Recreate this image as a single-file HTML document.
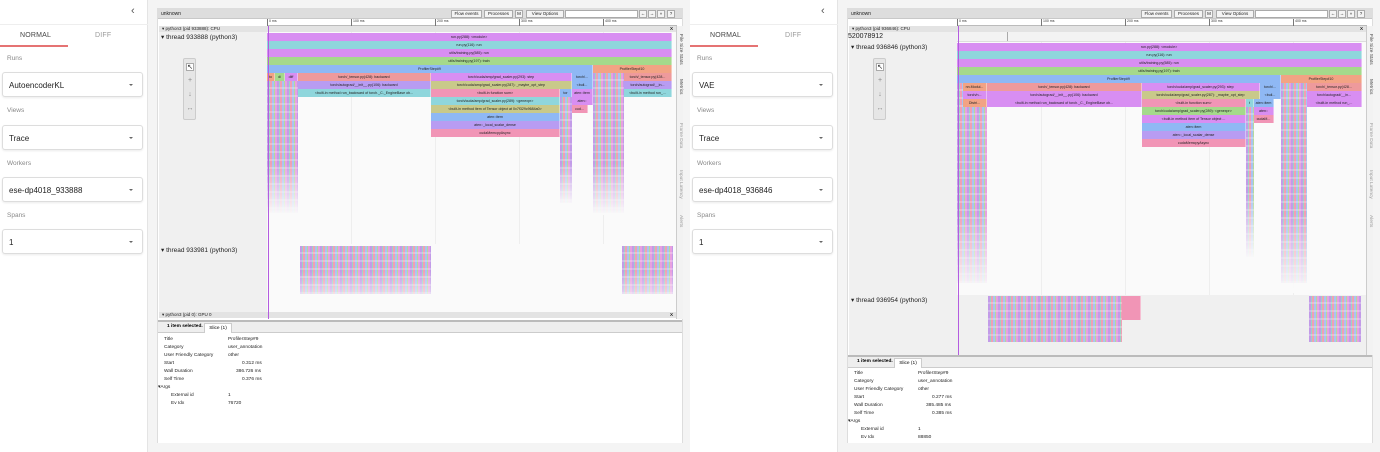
<!DOCTYPE html>
<html><head><meta charset="utf-8">
<style>
*{box-sizing:border-box;margin:0;padding:0}
body{width:1380px;height:452px;background:#f4f4f4;font-family:"Liberation Sans",sans-serif;position:relative;overflow:hidden}
.p{position:absolute;top:0;width:690px;height:452px;overflow:hidden}
.side{position:absolute;left:0;top:0;width:148px;height:452px;background:#fff;border-right:1px solid #e4e4e4}
.arrow{position:absolute;left:131px;top:5px;font-size:11px;color:#555}
.hr{position:absolute;left:0;width:148px;top:24px;border-top:1px solid #eee}
.tab{position:absolute;top:32px;font-size:7px;color:#444;letter-spacing:.2px}
.ul{position:absolute;left:0;top:45px;width:68px;height:2px;background:#e57373}
.lab{position:absolute;left:7px;font-size:6.5px;color:#888}
.sel{position:absolute;left:2px;width:141px;height:25px;border:1px solid #ddd;border-radius:3px;background:#fff;box-shadow:0 1px 2px rgba(0,0,0,.08);font-size:8px;color:#222;padding:8px 0 0 6px}
.sel:after{content:"";position:absolute;right:9px;top:11px;border:2px solid transparent;border-top:2.5px solid #666}
.tr{position:absolute;left:157px;top:8px;width:526px;height:435px;background:#fff;border:1px solid #ddd}
.top{position:absolute;left:0;top:0;width:524px;height:10px;background:#ddd;border-bottom:1px solid #c8c8c8;font-size:5px;line-height:10px;padding-left:3px;color:#222}
.btn{position:absolute;top:1px;height:8px;background:#f4f4f4;border:1px solid #aaa;font-size:4.5px;line-height:6px;text-align:center;color:#222}
.ruler{position:absolute;left:109px;top:10px;width:410px;height:7px;background:#fff;border-bottom:1px solid #bbb;font-size:3.5px;color:#333}
.tick{position:absolute;top:0;height:7px;border-left:1px solid #777;padding-left:1px}
.ph{position:absolute;left:1px;height:6px;background:#e3e3e3;font-size:4.5px;line-height:6px;padding-left:3px;color:#222;width:517px}
.ph b{position:absolute;right:3px;font-weight:bold}
.thl{position:absolute;left:3px;font-size:6.5px;color:#222}
.trk{position:absolute;left:1px;width:517px;background:#f0f0f0}
.area{position:absolute;left:109px;width:409px;background:#fafafa}
.b{position:absolute;height:8px;font-size:3.6px;line-height:8px;text-align:center;overflow:hidden;white-space:nowrap;color:#222;border-right:1px solid rgba(255,255,255,.4)}
.pu{background:#d88ef2}.te{background:#8fd6dc}.gr{background:#a5d98b}.bl{background:#8fb8f4}.or{background:#f2a384}.pk{background:#f195b6}.sa{background:#ee9a9c}.ol{background:#c9c98a}.vi{background:#b89cf2}
.col{position:absolute;background:repeating-linear-gradient(180deg,rgba(255,255,255,0) 0 6px,rgba(255,255,255,.25) 6px 8px),repeating-linear-gradient(90deg,#c29be8 0 2px,#9fd2c5 2px 3px,#f0a0b4 3px 5px,#a9c3f2 5px 7px,#b5d99e 7px 8px,#e8a0e0 8px 10px)}
.fade{position:absolute;background:linear-gradient(#fff0,#fafafa)}
.side2{position:absolute;left:518px;top:17px;width:7px;height:300px;background:#f2f2f2;border-left:1px solid #ccc}
.vt{position:absolute;left:0;width:7px;writing-mode:vertical-rl;font-size:4.8px;color:#999;text-align:center;line-height:7px}
.tool{position:absolute;left:25px;width:13px;height:62px;background:#e6e6e6;border:1px solid #ccc;border-radius:2px}
.tool i{position:absolute;left:2px;width:8px;height:8px;font-style:normal;font-size:7px;color:#888;text-align:center;line-height:8px}
.vline{position:absolute;left:110px;width:1px;background:#b45ce0}
.bot{position:absolute;left:0;width:524px;background:#fff;border-top:2px solid #bbb}
.bbar{position:absolute;left:0;top:0;width:524px;height:11px;background:#eee;border-bottom:1px solid #ccc}
.bt{position:absolute;top:2px;font-size:4.8px;font-weight:bold;left:9px}
.st{position:absolute;top:1px;left:46px;height:10px;width:28px;background:#fff;border:1px solid #ccc;border-bottom:none;font-size:4.8px;text-align:center;line-height:9px}
.kv{position:absolute;font-size:4.8px;color:#222;white-space:nowrap}
.grid{position:absolute;top:0;bottom:0;width:1px;background:#eee}
</style></head><body>

<div class="p" style="left:0">
 <div class="side">
  <div class="arrow">‹</div><div class="hr"></div>
  <div class="tab" style="left:20px">NORMAL</div><div class="tab" style="left:95px;color:#999">DIFF</div>
  <div class="ul"></div>
  <div class="lab" style="top:55px">Runs</div><div class="sel" style="top:72px">AutoencoderKL</div>
  <div class="lab" style="top:107px">Views</div><div class="sel" style="top:125px">Trace</div>
  <div class="lab" style="top:160px">Workers</div><div class="sel" style="top:177px">ese-dp4018_933888</div>
  <div class="lab" style="top:212px">Spans</div><div class="sel" style="top:229px">1</div>
 </div>
 <div class="tr">
  <div class="top">unknown
   <div class="btn" style="left:293px;width:31px">Flow events</div>
   <div class="btn" style="left:326px;width:29px">Processes</div>
   <div class="btn" style="left:357px;width:8px">M</div>
   <div class="btn" style="left:368px;width:38px">View Options</div>
   <div class="btn" style="left:407px;width:73px;background:#fff"></div>
   <div class="btn" style="left:481px;width:8px">←</div>
   <div class="btn" style="left:490px;width:8px">→</div>
   <div class="btn" style="left:499px;width:8px">»</div>
   <div class="btn" style="left:509px;width:8px">?</div>
  </div>
  <div class="ruler"><div class="tick" style="left:0">0 ms</div><div class="tick" style="left:84px">100 ms</div><div class="tick" style="left:168px">200 ms</div><div class="tick" style="left:252px">300 ms</div><div class="tick" style="left:336px">400 ms</div></div>
  <div class="trk" style="top:23px;height:212px"></div>
  <div class="area" style="top:23px;height:212px">
   <div class="grid" style="left:84px"></div><div class="grid" style="left:168px"></div><div class="grid" style="left:252px"></div><div class="grid" style="left:336px"></div>
  </div>
  <div class="ph" style="top:17px">▾ python3 (pid 933888): CPU<b>X</b></div>
  <div class="thl" style="top:24px">▾ thread 933888 (python3)</div>
  <div class="tool" style="top:49px"><i style="top:4px;background:#fff;border:1px solid #aaa;color:#333">↖</i><i style="top:18px">+</i><i style="top:32px">↓</i><i style="top:46px">↔</i></div>
  <div style="position:absolute;left:109px;top:24px;width:409px;height:211px">
   <div class="b pu" style="left:0;top:0;width:405px">run.py(288): &lt;module&gt;</div>
   <div class="b te" style="left:0;top:8px;width:405px">run.py(116): run</div>
   <div class="b pu" style="left:0;top:16px;width:405px">utils/training.py(585): run</div>
   <div class="b gr" style="left:0;top:24px;width:405px">utils/training.py(197): train</div>
   <div class="b bl" style="left:0;top:32px;width:326px">ProfilerStep#9</div>
   <div class="b or" style="left:326px;top:32px;width:79px">ProfilerStep#10</div>
   <div class="col" style="left:0;top:40px;width:31px;height:140px"></div>
   <div class="b or" style="left:0;top:40px;width:8px">to</div><div class="b gr" style="left:8px;top:40px;width:10px">di</div><div class="b pu" style="left:18px;top:40px;width:13px">diff</div>
   <div class="b sa" style="left:31px;top:40px;width:133px">torch/_tensor.py(428): backward</div>
   <div class="b pu" style="left:164px;top:40px;width:141px">torch/cuda/amp/grad_scaler.py(293): step</div>
   <div class="b bl" style="left:305px;top:40px;width:21px">torch/...</div>
   <div class="col" style="left:326px;top:40px;width:31px;height:140px"></div>
   <div class="b sa" style="left:357px;top:40px;width:48px">torch/_tensor.py(428...</div>
   <div class="b vi" style="left:31px;top:48px;width:133px">torch/autograd/__init__.py(106): backward</div>
   <div class="b ol" style="left:164px;top:48px;width:141px">torch/cuda/amp/grad_scaler.py(287): _maybe_opt_step</div>
   <div class="b bl" style="left:305px;top:48px;width:21px">&lt;buil...</div>
   <div class="b vi" style="left:357px;top:48px;width:48px">torch/autograd/__in...</div>
   <div class="b te" style="left:31px;top:56px;width:133px">&lt;built-in method run_backward of torch._C._EngineBase ob...</div>
   <div class="b pk" style="left:164px;top:56px;width:129px">&lt;built-in function sum&gt;</div>
   <div class="b bl" style="left:293px;top:56px;width:12px">tor</div><div class="b pu" style="left:305px;top:56px;width:21px">aten::item</div>
   <div class="b te" style="left:357px;top:56px;width:48px">&lt;built-in method run_...</div>
   <div class="b te" style="left:164px;top:64px;width:129px">torch/cuda/amp/grad_scaler.py(289): &lt;genexpr&gt;</div>
   <div class="b pu" style="left:305px;top:64px;width:21px">aten::</div>
   <div class="b ol" style="left:164px;top:72px;width:129px">&lt;built-in method item of Tensor object at 0x7f329c9684a0&gt;</div>
   <div class="b pk" style="left:305px;top:72px;width:16px">cud...</div>
   <div class="b bl" style="left:164px;top:80px;width:129px">aten::item</div>
   <div class="b vi" style="left:164px;top:88px;width:129px">aten::_local_scalar_dense</div>
   <div class="b pk" style="left:164px;top:96px;width:129px">cudaMemcpyAsync</div>
   <div class="col" style="left:293px;top:64px;width:12px;height:106px"></div>
   <div class="fade" style="left:0;top:130px;width:31px;height:52px"></div>
   <div class="fade" style="left:293px;top:130px;width:12px;height:42px"></div>
   <div class="fade" style="left:326px;top:130px;width:31px;height:52px"></div>
  </div>
  <div class="trk" style="top:235px;height:68px"></div>
  <div class="area" style="top:235px;height:68px"></div>
  <div class="thl" style="top:237px">▾ thread 933981 (python3)</div>
  <div class="col" style="left:142px;top:237px;width:131px;height:48px"></div>
  <div class="fade" style="left:142px;top:262px;width:131px;height:40px"></div>
  <div class="col" style="left:464px;top:237px;width:51px;height:48px"></div>
  <div class="fade" style="left:464px;top:262px;width:51px;height:40px"></div>
  <div class="ph" style="top:303px">▾ python3 (pid 0): GPU 0<b>X</b></div>
  <div class="side2" style="height:293px"><div class="vt" style="top:3px;height:40px;color:#444">File Size Stats</div><div class="vt" style="top:48px;height:26px;color:#444">Metrics</div><div class="vt" style="top:90px;height:40px">Frame Data</div><div class="vt" style="top:138px;height:40px">Input Latency</div><div class="vt" style="top:185px;height:20px">Alerts</div></div>
  <div class="vline" style="top:17px;height:293px"></div>
  <div class="bot" style="top:311px;height:123px">
   <div class="bbar"><div class="bt">1 item selected.</div><div class="st">Slice (1)</div></div>
   <div class="kv" style="left:6px;top:15px">Title</div><div class="kv" style="left:70px;top:15px">ProfilerStep#9</div>
   <div class="kv" style="left:6px;top:23px">Category</div><div class="kv" style="left:70px;top:23px">user_annotation</div>
   <div class="kv" style="left:6px;top:31px">User Friendly Category</div><div class="kv" style="left:70px;top:31px">other</div>
   <div class="kv" style="left:6px;top:39px">Start</div><div class="kv" style="left:84px;top:39px">0.312 ms</div>
   <div class="kv" style="left:6px;top:47px">Wall Duration</div><div class="kv" style="left:78px;top:47px">386.726 ms</div>
   <div class="kv" style="left:6px;top:55px">Self Time</div><div class="kv" style="left:84px;top:55px">0.376 ms</div>
   <div class="kv" style="left:0;top:63px">▾Args</div>
   <div class="kv" style="left:13px;top:71px">External id</div><div class="kv" style="left:70px;top:71px">1</div>
   <div class="kv" style="left:13px;top:79px">Ev Idx</div><div class="kv" style="left:70px;top:79px">76720</div>
  </div>
 </div>
</div>

<div class="p" style="left:690px">
 <div class="side">
  <div class="arrow">‹</div><div class="hr"></div>
  <div class="tab" style="left:20px">NORMAL</div><div class="tab" style="left:95px;color:#999">DIFF</div>
  <div class="ul"></div>
  <div class="lab" style="top:55px">Runs</div><div class="sel" style="top:72px">VAE</div>
  <div class="lab" style="top:107px">Views</div><div class="sel" style="top:125px">Trace</div>
  <div class="lab" style="top:160px">Workers</div><div class="sel" style="top:177px">ese-dp4018_936846</div>
  <div class="lab" style="top:212px">Spans</div><div class="sel" style="top:229px">1</div>
 </div>
 <div class="tr">
  <div class="top">unknown
   <div class="btn" style="left:293px;width:31px">Flow events</div>
   <div class="btn" style="left:326px;width:29px">Processes</div>
   <div class="btn" style="left:357px;width:8px">M</div>
   <div class="btn" style="left:368px;width:38px">View Options</div>
   <div class="btn" style="left:407px;width:73px;background:#fff"></div>
   <div class="btn" style="left:481px;width:8px">←</div>
   <div class="btn" style="left:490px;width:8px">→</div>
   <div class="btn" style="left:499px;width:8px">»</div>
   <div class="btn" style="left:509px;width:8px">?</div>
  </div>
  <div class="ruler"><div class="tick" style="left:0">0 ms</div><div class="tick" style="left:84px">100 ms</div><div class="tick" style="left:168px">200 ms</div><div class="tick" style="left:252px">300 ms</div><div class="tick" style="left:336px">400 ms</div></div>
  <div class="trk" style="top:23px;height:263px"></div>
  <div class="area" style="top:23px;height:263px">
   <div class="grid" style="left:84px"></div><div class="grid" style="left:168px"></div><div class="grid" style="left:252px"></div><div class="grid" style="left:336px"></div>
  </div>
  <div class="area" style="top:23px;height:10px;background:#f3f3f3;border-bottom:1px solid #ddd"><div class="grid" style="left:50px;background:#aaa"></div></div>
  <div class="ph" style="top:17px">▾ python3 (pid 936846): CPU<b>X</b></div>
  <div class="thl" style="top:24px;left:0;font-size:7px">520078912</div>
  <div class="thl" style="top:34px">▾ thread 936846 (python3)</div>
  <div class="tool" style="top:49px"><i style="top:4px;background:#fff;border:1px solid #aaa;color:#333">↖</i><i style="top:18px">+</i><i style="top:32px">↓</i><i style="top:46px">↔</i></div>
  <div style="position:absolute;left:109px;top:34px;width:409px;height:252px">
   <div class="b pu" style="left:0;top:0;width:405px">run.py(288): &lt;module&gt;</div>
   <div class="b te" style="left:0;top:8px;width:405px">run.py(116): run</div>
   <div class="b pu" style="left:0;top:16px;width:405px">utils/training.py(585): run</div>
   <div class="b gr" style="left:0;top:24px;width:405px">utils/training.py(197): train</div>
   <div class="b bl" style="left:0;top:32px;width:324px">ProfilerStep#9</div>
   <div class="b or" style="left:324px;top:32px;width:81px">ProfilerStep#10</div>
   <div class="col" style="left:0;top:40px;width:30px;height:200px"></div>
   <div class="b or" style="left:6px;top:40px;width:24px">nn.Modul...</div>
   <div class="b sa" style="left:30px;top:40px;width:155px">torch/_tensor.py(428): backward</div>
   <div class="b pu" style="left:185px;top:40px;width:118px">torch/cuda/amp/grad_scaler.py(293): step</div>
   <div class="b bl" style="left:303px;top:40px;width:21px">torch/...</div>
   <div class="col" style="left:324px;top:40px;width:26px;height:200px"></div>
   <div class="b sa" style="left:350px;top:40px;width:55px">torch/_tensor.py(428...</div>
   <div class="b pu" style="left:6px;top:48px;width:24px">torch/n...</div>
   <div class="b pu" style="left:30px;top:48px;width:155px">torch/autograd/__init__.py(106): backward</div>
   <div class="b ol" style="left:185px;top:48px;width:118px">torch/cuda/amp/grad_scaler.py(287): _maybe_opt_step</div>
   <div class="b bl" style="left:303px;top:48px;width:21px">&lt;buil...</div>
   <div class="b pu" style="left:350px;top:48px;width:55px">torch/autograd/__in...</div>
   <div class="b or" style="left:6px;top:56px;width:24px">Distri...</div>
   <div class="b pu" style="left:30px;top:56px;width:155px">&lt;built-in method run_backward of torch._C._EngineBase ob...</div>
   <div class="b pk" style="left:185px;top:56px;width:104px">&lt;built-in function sum&gt;</div>
   <div class="b te" style="left:289px;top:56px;width:8px">t</div><div class="b bl" style="left:297px;top:56px;width:20px">aten::item</div>
   <div class="b pu" style="left:350px;top:56px;width:55px">&lt;built-in method run_...</div>
   <div class="b gr" style="left:185px;top:64px;width:104px">torch/cuda/amp/grad_scaler.py(289): &lt;genexpr&gt;</div>
   <div class="b pu" style="left:297px;top:64px;width:20px">aten::</div>
   <div class="b pu" style="left:185px;top:72px;width:104px">&lt;built-in method item of Tensor object ...</div>
   <div class="b pk" style="left:297px;top:72px;width:20px">cudaM...</div>
   <div class="b bl" style="left:185px;top:80px;width:104px">aten::item</div>
   <div class="b vi" style="left:185px;top:88px;width:104px">aten::_local_scalar_dense</div>
   <div class="b pk" style="left:185px;top:96px;width:104px">cudaMemcpyAsync</div>
   <div class="col" style="left:289px;top:64px;width:8px;height:150px"></div>
   <div class="fade" style="left:0;top:170px;width:30px;height:80px"></div>
   <div class="fade" style="left:289px;top:150px;width:8px;height:66px"></div>
   <div class="fade" style="left:324px;top:170px;width:26px;height:80px"></div>
  </div>
  <div class="trk" style="top:286px;height:60px"></div>
  <div class="area" style="top:286px;height:60px;background:#f0f0f0"></div>
  <div class="thl" style="top:287px">▾ thread 936954 (python3)</div>
  <div class="col" style="left:140px;top:287px;width:134px;height:46px"></div>
  <div class="b pk" style="left:274px;top:287px;width:19px;height:24px"></div>
  <div class="col" style="left:461px;top:287px;width:52px;height:46px"></div>
  <div class="side2" style="height:329px"><div class="vt" style="top:3px;height:40px;color:#444">File Size Stats</div><div class="vt" style="top:48px;height:26px;color:#444">Metrics</div><div class="vt" style="top:90px;height:40px">Frame Data</div><div class="vt" style="top:138px;height:40px">Input Latency</div><div class="vt" style="top:185px;height:20px">Alerts</div></div>
  <div class="vline" style="top:17px;height:329px"></div>
  <div class="bot" style="top:346px;height:88px">
   <div class="bbar"><div class="bt">1 item selected.</div><div class="st">Slice (1)</div></div>
   <div class="kv" style="left:6px;top:14px">Title</div><div class="kv" style="left:70px;top:14px">ProfilerStep#9</div>
   <div class="kv" style="left:6px;top:22px">Category</div><div class="kv" style="left:70px;top:22px">user_annotation</div>
   <div class="kv" style="left:6px;top:30px">User Friendly Category</div><div class="kv" style="left:70px;top:30px">other</div>
   <div class="kv" style="left:6px;top:38px">Start</div><div class="kv" style="left:84px;top:38px">0.277 ms</div>
   <div class="kv" style="left:6px;top:46px">Wall Duration</div><div class="kv" style="left:78px;top:46px">385.485 ms</div>
   <div class="kv" style="left:6px;top:54px">Self Time</div><div class="kv" style="left:84px;top:54px">0.385 ms</div>
   <div class="kv" style="left:0;top:62px">▾Args</div>
   <div class="kv" style="left:13px;top:70px">External id</div><div class="kv" style="left:70px;top:70px">1</div>
   <div class="kv" style="left:13px;top:78px">Ev Idx</div><div class="kv" style="left:70px;top:78px">88850</div>
  </div>
 </div>
</div>
</body></html>
